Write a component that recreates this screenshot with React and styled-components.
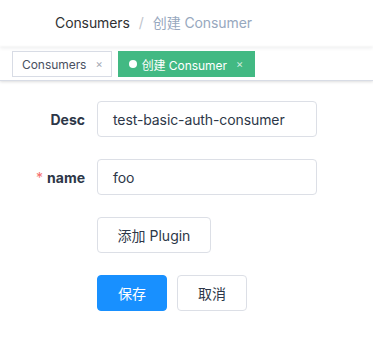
import React from "react";
import styled, { createGlobalStyle } from "styled-components";

const Global = createGlobalStyle`
  html, body { margin: 0; padding: 0; background: #fff; }
  body { font-family: Inter, "Noto Sans CJK SC", sans-serif; -webkit-font-smoothing: antialiased; }
  * { box-sizing: border-box; }
`;

const Navbar = styled.div`
  height: 47px;
  display: flex;
  align-items: center;
  padding-left: 55px;
  padding-bottom: 3px;
  box-shadow: 0 1px 4px rgba(0, 21, 41, 0.08);
  position: relative;
  z-index: 2;
`;

const Crumb = styled.span`
  font-size: 14px;
  letter-spacing: -0.1px;
  color: ${(p) => (p.$current ? "#97a8be" : "#303133")};
`;

const Sep = styled.span`
  font-size: 14px;
  color: #c0c4cc;
  margin: 0 9px;
`;

const TagsBar = styled.div`
  height: 34px;
  display: flex;
  align-items: flex-start;
  gap: 6px;
  padding: 4px 0 0 12px;
  border-bottom: 1px solid #d8dce5;
  box-shadow: 0 1px 3px 0 rgba(0, 0, 0, 0.12), 0 0 3px 0 rgba(0, 0, 0, 0.04);
`;

const Tag = styled.div`
  height: 26px;
  display: flex;
  align-items: center;
  padding: 0 ${(p) => (p.$active ? "11px" : "8px")} 0 ${(p) => (p.$active ? "10px" : "9px")};
  font-size: 12px;
  letter-spacing: -0.05px;
  border: 1px solid ${(p) => (p.$active ? "#42b983" : "#d8dce5")};
  background: ${(p) => (p.$active ? "#42b983" : "#fff")};
  color: ${(p) => (p.$active ? "#fff" : "#495060")};
`;

const Dot = styled.span`
  width: 8px;
  height: 8px;
  border-radius: 50%;
  background: #fff;
  margin-right: 5px;
`;

const Close = styled.span`
  font-size: 11px;
  margin-left: 9px;
  line-height: 1;
  color: ${(p) => (p.$active ? "rgba(255,255,255,0.75)" : "#a3a8b3")};
`;

const Main = styled.div`
  padding: 20px 0 0 0;
`;

const Form = styled.div`
  display: flex;
  flex-direction: column;
  gap: 22px;
`;

const Row = styled.div`
  display: flex;
  align-items: center;
  height: 36px;
`;

const Label = styled.label`
  width: 97px;
  padding-right: 12px;
  text-align: right;
  font-size: 14px;
  font-weight: 700;
  color: #2d3748;
`;

const Star = styled.span`
  color: #f56c6c;
  margin-right: 4px;
  font-weight: 400;
`;

const Input = styled.div`
  width: 220px;
  height: 36px;
  border: 1px solid #dcdfe6;
  border-radius: 4px;
  padding: 0 15px;
  display: flex;
  align-items: center;
  font-size: 14px;
  letter-spacing: -0.1px;
  color: #2d3748;
`;

const Buttons = styled.div`
  display: flex;
  gap: 10px;
`;

const Button = styled.button`
  height: 36px;
  width: ${(p) => p.$w}px;
  border-radius: 4px;
  border: 1px solid ${(p) => (p.$primary ? "#1890ff" : "#dcdfe6")};
  background: ${(p) => (p.$primary ? "#1890ff" : "#fff")};
  color: ${(p) => (p.$primary ? "#fff" : "#2d3748")};
  font-family: Inter, "Noto Sans CJK SC", sans-serif;
  font-size: 14px;
  padding: 0;
`;

const Spacer = styled.div`
  width: 97px;
`;

export default function App() {
  return (
    <>
      <Global />
      <Navbar>
        <Crumb>Consumers</Crumb>
        <Sep>/</Sep>
        <Crumb $current>创建 Consumer</Crumb>
      </Navbar>
      <TagsBar>
        <Tag>
          Consumers<Close>×</Close>
        </Tag>
        <Tag $active>
          <Dot />
          创建 Consumer<Close $active>×</Close>
        </Tag>
      </TagsBar>
      <Main>
        <Form>
          <Row>
            <Label>Desc</Label>
            <Input>test-basic-auth-consumer</Input>
          </Row>
          <Row>
            <Label>
              <Star>*</Star>name
            </Label>
            <Input>foo</Input>
          </Row>
          <Row>
            <Spacer />
            <Button $w={114}>添加 Plugin</Button>
          </Row>
          <Row>
            <Spacer />
            <Buttons>
              <Button $primary $w={70}>保存</Button>
              <Button $w={70}>取消</Button>
            </Buttons>
          </Row>
        </Form>
      </Main>
    </>
  );
}
